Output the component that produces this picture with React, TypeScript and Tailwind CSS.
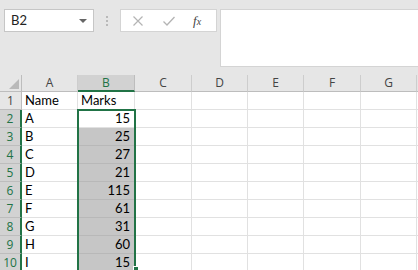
import React from 'react';

const rows = [
  { a: 'Name', b: 'Marks' },
  { a: 'A', b: '15' },
  { a: 'B', b: '25' },
  { a: 'C', b: '27' },
  { a: 'D', b: '21' },
  { a: 'E', b: '115' },
  { a: 'F', b: '61' },
  { a: 'G', b: '31' },
  { a: 'H', b: '60' },
  { a: 'I', b: '15' },
];

const cols = ['A', 'B', 'C', 'D', 'E', 'F', 'G'];

export default function App() {
  return (
    <div className="w-[418px] h-[270px] overflow-hidden bg-[#e6e6e6] relative font-['Lato',sans-serif]">
      {/* Formula bar */}
      <div className="flex items-start pt-[9px] h-[75px]">
        <div className="ml-[4px] w-[90px] h-[23px] bg-white border border-[#c6c6c6] flex items-center justify-between pl-[6px] pr-[6px]">
          <span className="text-[13px] text-[#222]">B2</span>
          <span className="w-0 h-0 border-l-[4px] border-r-[4px] border-t-[4px] border-l-transparent border-r-transparent border-t-[#666]" />
        </div>
        <div className="w-[26px] h-[23px] flex flex-col items-center justify-center gap-[2px]">
          <span className="w-[2px] h-[2px] rounded-full bg-[#aaa]" />
          <span className="w-[2px] h-[2px] rounded-full bg-[#aaa]" />
          <span className="w-[2px] h-[2px] rounded-full bg-[#aaa]" />
        </div>
        <div className="w-[97px] h-[23px] bg-white border border-[#d4d4d4] flex items-center">
          <svg width="12" height="12" viewBox="0 0 12 12" className="ml-[11px]">
            <path d="M1.5 1.5 L10.5 10.5 M10.5 1.5 L1.5 10.5" stroke="#b4b4b4" strokeWidth="1.2" fill="none" />
          </svg>
          <svg width="14" height="12" viewBox="0 0 14 12" className="ml-[18px]">
            <path d="M1.5 6.5 L5 10 L12.5 2" stroke="#b4b4b4" strokeWidth="1.3" fill="none" />
          </svg>
          <span className="ml-[17px] text-[13px] italic text-[#444] font-['Liberation_Serif',serif] leading-none">
            f<span className="text-[10px]">x</span>
          </span>
        </div>
        <div className="ml-[3px] flex-1 h-[58px] bg-white border border-[#d4d4d4] border-r-0" />
      </div>

      {/* Sheet */}
      <div className="grid grid-cols-[22px_56px_57px_57px_56px_56px_57px_56px_1fr] bg-white">
        {/* header row */}
        <div className="h-[17px] bg-[#e6e6e6] border-r border-b border-[#bdbdbd] flex items-end justify-end pr-[2px] pb-[2px]">
          <svg width="10" height="10" viewBox="0 0 10 10">
            <path d="M10 0 L10 10 L0 10 Z" fill="#b9b9b9" />
          </svg>
        </div>
        {cols.map((c) => (
          <div
            key={c}
            className={
              c === 'B'
                ? "h-[17px] bg-[#d2d2d2] border-r border-[#bdbdbd] border-b-2 border-b-[#217346] flex items-center justify-center text-[12px] text-[#217346] font-['Open_Sans',sans-serif]"
                : "h-[17px] bg-[#e6e6e6] border-r border-b border-[#cdcdcd] border-b-[#bdbdbd] flex items-center justify-center text-[12px] text-[#444] font-['Open_Sans',sans-serif]"
            }
          >
            {c}
          </div>
        ))}
        <div className="h-[17px] bg-[#e6e6e6] border-b border-[#bdbdbd]" />

        {rows.map((r, i) => {
          const n = i + 1;
          const sel = n >= 2;
          return (
            <React.Fragment key={n}>
              <div
                className={
                  sel
                    ? "h-[18px] bg-[#d2d2d2] border-b border-[#bdbdbd] border-r-2 border-r-[#217346] flex items-center justify-center text-[12px] text-[#217346] font-['Open_Sans',sans-serif]"
                    : "h-[18px] bg-[#e6e6e6] border-b border-r border-[#bdbdbd] flex items-center justify-center text-[12px] text-[#444] font-['Open_Sans',sans-serif]"
                }
              >
                {n}
              </div>
              <div className="h-[18px] border-r border-b border-[#e1e1e1] flex items-center pl-[3px] text-[13px] text-black">
                {r.a}
              </div>
              <div
                className={`h-[18px] border-r border-b flex items-center text-[13px] text-black ${
                  n === 1 ? 'pl-[3px]' : 'justify-end pr-[4px]'
                } ${n >= 3 ? 'bg-[#c6c6c6] border-[#b8b8b8]' : 'border-[#e1e1e1]'}`}
              >
                {r.b}
              </div>
              <div className="h-[18px] border-r border-b border-[#e1e1e1]" />
              <div className="h-[18px] border-r border-b border-[#e1e1e1]" />
              <div className="h-[18px] border-r border-b border-[#e1e1e1]" />
              <div className="h-[18px] border-r border-b border-[#e1e1e1]" />
              <div className="h-[18px] border-r border-b border-[#e1e1e1]" />
              <div className="h-[18px] border-b border-[#e1e1e1]" />
            </React.Fragment>
          );
        })}
      </div>

      {/* selection outline B2:B10 */}
      <div className="absolute left-[77px] top-[109px] w-[59px] h-[163px] border-2 border-[#217346] pointer-events-none" />
      <div className="absolute left-[133px] top-[266px] w-[6px] h-[6px] bg-[#217346] border border-white pointer-events-none" />
    </div>
  );
}
